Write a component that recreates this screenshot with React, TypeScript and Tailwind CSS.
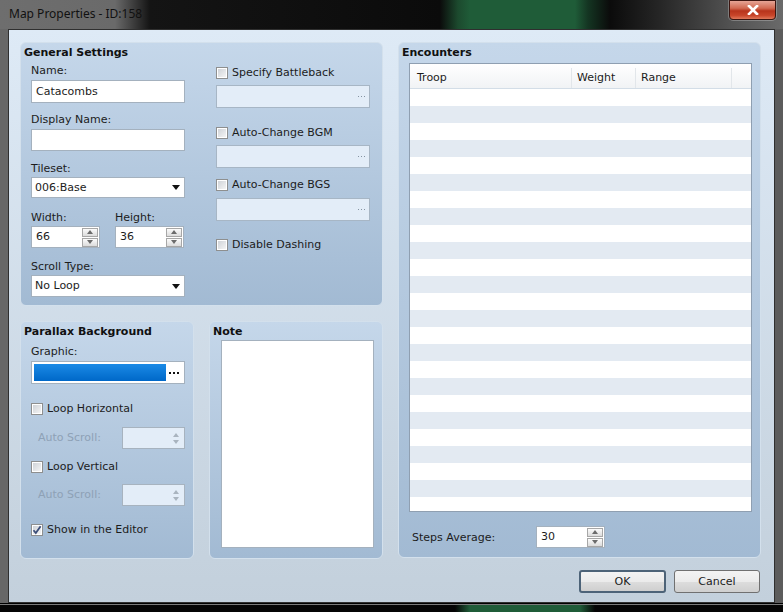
import React from "react";

const font = "font-['DejaVu_Sans',sans-serif]";

function Checkbox({ checked = false }: { checked?: boolean }) {
  return (
    <span className="w-[12px] h-[12px] border border-[#8e8f8f] bg-white p-[1px] flex shrink-0">
      <span className="flex-1 bg-gradient-to-br from-[#cfd3d8] to-[#f4f4f4] flex items-center justify-center">
        {checked && (
          <svg width="10" height="10" viewBox="0 0 10 10" className="-m-[1px]">
            <path d="M1.5 5.2 L3.8 8 L8.6 1.2" stroke="#3d4f7a" strokeWidth="1.8" fill="none" />
          </svg>
        )}
      </span>
    </span>
  );
}

function CheckRow({ label, checked, className = "" }: { label: string; checked?: boolean; className?: string }) {
  return (
    <div className={`flex items-center h-[14px] gap-[4px] ${className}`}>
      <Checkbox checked={checked} />
      <span className="leading-[14px]">{label}</span>
    </div>
  );
}

function Arrow() {
  return (
    <svg width="8" height="5" viewBox="0 0 8 5">
      <path d="M0 0 H8 L4 5 Z" fill="#111" />
    </svg>
  );
}

function Combo({ value, className = "" }: { value: string; className?: string }) {
  return (
    <div className={`w-[154px] bg-white border border-[#a4b1be] flex items-center justify-between pl-[3px] pr-[4px] ${className}`}>
      <span className="leading-[14px]">{value}</span>
      <Arrow />
    </div>
  );
}

function SpinArrow({ up, color = "#6b6b6b" }: { up?: boolean; color?: string }) {
  return (
    <svg width="6" height="4" viewBox="0 0 6 4">
      <path d={up ? "M0 4 H6 L3 0 Z" : "M0 0 H6 L3 4 Z"} fill={color} />
    </svg>
  );
}

function Spin({ value, className = "" }: { value: string; className?: string }) {
  return (
    <div className={`h-[22px] bg-white border border-[#a4b1be] flex items-center ${className}`}>
      <span className="flex-1 pl-[4px] leading-[14px]">{value}</span>
      <div className="flex flex-col gap-[1px] mr-[1px]">
        <span className="w-[16px] h-[9px] border border-[#a7a7a7] bg-gradient-to-b from-[#fbfbfb] to-[#dcdcdc] flex items-center justify-center">
          <SpinArrow up />
        </span>
        <span className="w-[16px] h-[9px] border border-[#a7a7a7] bg-gradient-to-b from-[#fbfbfb] to-[#dcdcdc] flex items-center justify-center">
          <SpinArrow />
        </span>
      </div>
    </div>
  );
}

function DisabledSpin({ className = "" }: { className?: string }) {
  return (
    <div className={`w-[63px] h-[22px] bg-[#e3edf8] border border-[#a7b3bf] flex items-center justify-end pr-[5px] ${className}`}>
      <div className="flex flex-col gap-[3px]">
        <SpinArrow up color="#a9b4bf" />
        <SpinArrow color="#a9b4bf" />
      </div>
    </div>
  );
}

function Dots({ color, size }: { color: string; size: number }) {
  return (
    <svg width={size * 3 + 4} height={size} viewBox={`0 0 ${size * 3 + 4} ${size}`}>
      <rect x="0" y="0" width={size} height={size} fill={color} />
      <rect x={size + 2} y="0" width={size} height={size} fill={color} />
      <rect x={size * 2 + 4} y="0" width={size} height={size} fill={color} />
    </svg>
  );
}

function BrowseDisabled({ className = "" }: { className?: string }) {
  return (
    <div className={`w-[154px] h-[23px] bg-[#e3edf8] border border-[#a7b6c5] flex items-center justify-end pr-[4px] ${className}`}>
      <Dots color="#8593a2" size={1} />
    </div>
  );
}

function Input({ value = "", className = "" }: { value?: string; className?: string }) {
  return (
    <div className={`w-[154px] bg-white border border-[#a4b1be] flex items-center pl-[4px] ${className}`}>
      <span className="leading-[14px]">{value}</span>
    </div>
  );
}

function Panel({ title, className = "", children }: { title: string; className?: string; children?: React.ReactNode }) {
  return (
    <div className={`rounded-[6px] border border-[#d3e0ec] bg-gradient-to-b from-[#c5d7ea] to-[#a2bad3] flex flex-col ${className}`}>
      <div className="pl-[3px] pt-[3px] h-[17px] font-bold leading-[14px] text-[#111]">{title}</div>
      {children}
    </div>
  );
}

export default function App() {
  return (
    <div className={`w-[783px] h-[612px] overflow-hidden flex flex-col text-[11px] text-[#1c1c1c] ${font} bg-[linear-gradient(90deg,#6e6e6e_0px,#6a6a6a_115px,#141414_150px,#0b0b0b_440px,#1c4a2e_458px,#1f5c38_470px,#1f5c38_575px,#143522_588px,#0b0b0b_610px,#262626_660px,#525252_730px,#6a6a6a_783px)]`}>
      {/* Title bar */}
      <div className="h-[29px] flex items-start shrink-0">
        <div className="h-[28px] flex items-center pl-[9px] font-['Noto_Sans',sans-serif] text-[12px] text-[#111]">
          Map Properties - ID:158
        </div>
        <div className="flex-1" />
        <div className="mr-[7px] w-[47px] h-[20px] rounded-b-[4px] border border-[#3b1510] bg-[linear-gradient(180deg,#e6a596_0%,#d16a52_40%,#b8341c_55%,#c8452a_80%,#e0785a_100%)] flex items-center justify-center shadow-[0_0_0_1px_rgba(255,255,255,0.25)]">
          <svg width="12" height="10" viewBox="0 0 12 10">
            <path d="M2 1 L10 9 M10 1 L2 9" stroke="#fff" strokeWidth="2.6" strokeLinecap="square" />
          </svg>
        </div>
      </div>

      {/* Frame + client */}
      <div className="flex h-[574px] shrink-0">
        <div className="w-[8px] bg-[#676767]" />
        <div className="w-[767px] border border-[#2f2f2f] bg-gradient-to-b from-[#deeaf6] to-[#c3d0dc] flex flex-col pl-[11px] pr-[13px] pt-[12px]">
          <div className="flex gap-[15px]">
            {/* Left column */}
            <div className="w-[363px] flex flex-col gap-[15px]">
              <Panel title="General Settings" className="h-[264px]">
                <div className="flex pl-[10px]">
                  <div className="w-[154px] flex flex-col">
                    <div className="mt-[4px] leading-[14px]">Name:</div>
                    <Input value="Catacombs" className="mt-[2px] h-[23px]" />
                    <div className="mt-[10px] leading-[14px]">Display Name:</div>
                    <Input className="mt-[2px] h-[22px]" />
                    <div className="mt-[11px] leading-[14px]">Tileset:</div>
                    <Combo value="006:Base" className="mt-[1px] h-[21px]" />
                    <div className="mt-[13px] flex">
                      <div className="w-[84px] leading-[14px]">Width:</div>
                      <div className="leading-[14px]">Height:</div>
                    </div>
                    <div className="mt-[1px] flex gap-[15px]">
                      <Spin value="66" className="w-[69px]" />
                      <Spin value="36" className="w-[69px]" />
                    </div>
                    <div className="mt-[12px] leading-[14px]">Scroll Type:</div>
                    <Combo value="No Loop" className="mt-[1px] h-[22px]" />
                  </div>
                  <div className="ml-[31px] w-[154px] flex flex-col">
                    <CheckRow label="Specify Battleback" className="mt-[6px]" />
                    <BrowseDisabled className="mt-[5px]" />
                    <CheckRow label="Auto-Change BGM" className="mt-[18px]" />
                    <BrowseDisabled className="mt-[5px]" />
                    <CheckRow label="Auto-Change BGS" className="mt-[10px]" />
                    <BrowseDisabled className="mt-[6px] h-[22px]" />
                    <CheckRow label="Disable Dashing" className="mt-[17px]" />
                  </div>
                </div>
              </Panel>
              <div className="flex gap-[15px] h-[238px]">
                <Panel title="Parallax Background" className="w-[174px]">
                  <div className="pl-[10px] flex flex-col">
                    <div className="mt-[6px] leading-[14px]">Graphic:</div>
                    <div className="mt-[2px] w-[154px] h-[23px] bg-white border border-[#a4b1be] flex items-center pl-[2px] pr-[3px]">
                      <div className="w-[132px] h-[17px] bg-gradient-to-b from-[#1a8ae6] to-[#0068c8]" />
                      <span className="flex-1 flex justify-center">
                        <Dots color="#111" size={2} />
                      </span>
                    </div>
                    <CheckRow label="Loop Horizontal" className="mt-[18px]" />
                    <div className="mt-[11px] flex items-center">
                      <span className="w-[91px] pl-[7px] text-[#8ea1b6] leading-[14px]">Auto Scroll:</span>
                      <DisabledSpin />
                    </div>
                    <CheckRow label="Loop Vertical" className="mt-[11px]" />
                    <div className="mt-[10px] flex items-center">
                      <span className="w-[91px] pl-[7px] text-[#8ea1b6] leading-[14px]">Auto Scroll:</span>
                      <DisabledSpin />
                    </div>
                    <CheckRow label="Show in the Editor" checked className="mt-[17px]" />
                  </div>
                </Panel>
                <Panel title="Note" className="w-[174px]">
                  <div className="ml-[11px] mt-[1px] w-[153px] h-[208px] bg-white border border-[#a4b1be]" />
                </Panel>
              </div>
            </div>

            {/* Encounters */}
            <Panel title="Encounters" className="w-[363px] h-[516px]">
              <div className="ml-[10px] mt-[3px] w-[343px] h-[449px] border border-[#8f9fb1] bg-white overflow-hidden flex flex-col">
                <div className="h-[25px] shrink-0 flex bg-gradient-to-b from-white to-[#f1f3f5] border-b border-[#d3dde7] pt-[4px]">
                  <div className="w-[162px] border-r border-[#e2e6ea] pl-[7px] flex items-center">Troop</div>
                  <div className="w-[64px] border-r border-[#e2e6ea] pl-[5px] flex items-center">Weight</div>
                  <div className="w-[96px] border-r border-[#e2e6ea] pl-[5px] flex items-center">Range</div>
                  <div className="flex-1" />
                </div>
                {Array.from({ length: 25 }).map((_, i) => (
                  <div key={i} className={i % 2 === 1 ? "h-[17px] shrink-0 bg-[#e3eaf2]" : "h-[17px] shrink-0 bg-white"} />
                ))}
              </div>
              <div className="mt-[14px] ml-[13px] flex items-center">
                <span className="w-[124px] leading-[14px] pt-[2px]">Steps Average:</span>
                <Spin value="30" className="w-[69px]" />
              </div>
            </Panel>
          </div>

          {/* Buttons */}
          <div className="mt-[11px] flex justify-end gap-[8px] pr-[1px]">
            <div className="w-[87px] h-[23px] pt-[2px] rounded-[3px] border-2 border-[#4d6378] bg-[linear-gradient(180deg,#f3f3f3_0%,#ebebeb_50%,#dddddd_51%,#cfcfcf_100%)] flex items-center justify-center">
              OK
            </div>
            <div className="w-[86px] h-[23px] pt-[2px] rounded-[3px] border border-[#707070] bg-[linear-gradient(180deg,#f3f3f3_0%,#ebebeb_50%,#dddddd_51%,#cfcfcf_100%)] flex items-center justify-center">
              Cancel
            </div>
          </div>
        </div>
        <div className="w-[8px] bg-[#5c5c5c]" />
      </div>

      {/* Bottom frame */}
      <div className="flex-1 flex flex-col">
        <div className="h-[1px] bg-[#000]" />
        <div className="h-[1px] bg-[#7a7a7a]" />
        <div className="flex-1 bg-[linear-gradient(90deg,#050505_0px,#050505_455px,#1f5c38_470px,#1f5c38_580px,#050505_595px)]" />
      </div>
    </div>
  );
}
